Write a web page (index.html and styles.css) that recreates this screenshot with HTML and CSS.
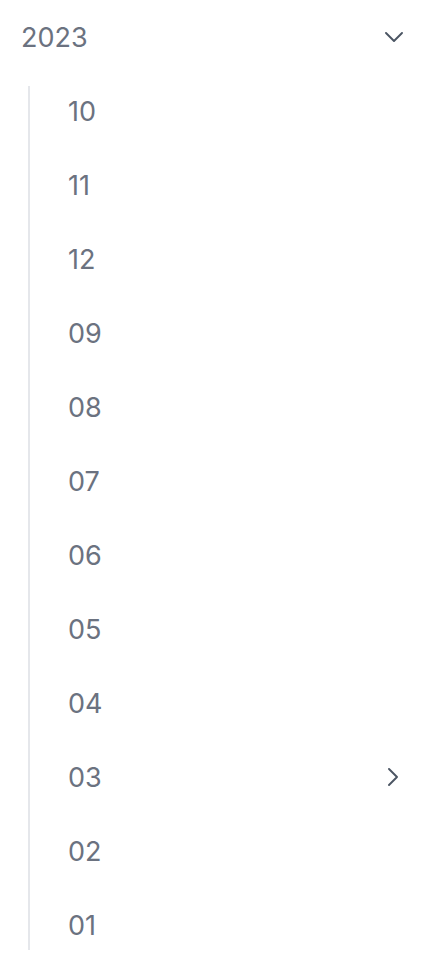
FILE: index.html
```html
<!DOCTYPE html>
<html>
<head>
<meta charset="utf-8">
<link rel="stylesheet" href="styles.css">
</head>
<body>
<div class="tree">
  <div class="year">
    <span>2023</span>
    <svg class="chev-down" width="18" height="10" viewBox="0 0 18 10"><path d="M1 1 L9 9 L17 1" fill="none" stroke="#4b5563" stroke-width="1.9" stroke-linecap="round" stroke-linejoin="round"/></svg>
  </div>
  <ul class="months">
    <li>10</li>
    <li>11</li>
    <li>12</li>
    <li>09</li>
    <li>08</li>
    <li>07</li>
    <li>06</li>
    <li>05</li>
    <li>04</li>
    <li><span>03</span><svg class="chev-right" width="10" height="18" viewBox="0 0 10 18"><path d="M1 1 L9 9 L1 17" fill="none" stroke="#4b5563" stroke-width="1.9" stroke-linecap="round" stroke-linejoin="round"/></svg></li>
    <li>02</li>
    <li>01</li>
  </ul>
</div>
</body>
</html>
```
FILE: styles.css
```css
html, body {
  margin: 0;
  padding: 0;
  background: #ffffff;
}
body {
  font-family: Inter, "Noto Sans", sans-serif;
  font-size: 27px;
  color: #6b7280;
}
.year {
  height: 74px;
  display: flex;
  align-items: center;
  justify-content: space-between;
  padding: 0 29px 0 21px;
}
.months {
  list-style: none;
  margin: 12px 0 0 28px;
  padding: 0;
  border-left: 2px solid #e5e7eb;
  display: flex;
  flex-direction: column;
  gap: 24px;
}
.months li {
  height: 50px;
  display: flex;
  align-items: center;
  justify-content: space-between;
  padding: 0 34px 0 38px;
}
svg { display: block; }
```
